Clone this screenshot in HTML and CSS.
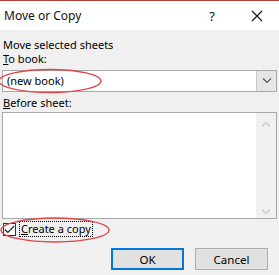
FILE: index.html
```html
<!DOCTYPE html>
<html>
<head>
  <title>Move or Copy</title>
  <link rel="stylesheet" href="styles.css">
</head>
<body>
  <div class="dialog">
    <div class="titlebar">
      <span class="title">Move or Copy</span>
      <span class="help">?</span>
      <span class="close">
        <svg width="12" height="12" viewBox="0 0 12 12"><path d="M1 1 L11 11 M11 1 L1 11" stroke="#111" stroke-width="1.1" fill="none"/></svg>
      </span>
    </div>

    <div class="content">
      <div class="label">Move selected sheets</div>
      <div class="label"><u>T</u>o book:</div>
      <div class="combo">
        <span class="combo-text">(new book)</span>
        <span class="combo-btn">
          <svg width="10" height="6" viewBox="0 0 10 6"><path d="M1 0.5 L5 4.5 L9 0.5" stroke="#555" stroke-width="1.1" fill="none"/></svg>
        </span>
      </div>
      <div class="label before"><u>B</u>efore sheet:</div>
      <div class="listbox">
        <div class="list-area"></div>
        <div class="scrollbar">
          <svg width="10" height="6" viewBox="0 0 10 6"><path d="M1 5.5 L5 1.5 L9 5.5" stroke="#c4c4c4" stroke-width="1.1" fill="none"/></svg>
          <svg width="10" height="6" viewBox="0 0 10 6"><path d="M1 0.5 L5 4.5 L9 0.5" stroke="#c4c4c4" stroke-width="1.1" fill="none"/></svg>
        </div>
      </div>
      <div class="check-row">
        <span class="checkbox">
          <svg width="11" height="9" viewBox="0 0 11 9"><path d="M0.8 4.5 L3.8 7.5 L10.2 1" stroke="#222" stroke-width="1.2" fill="none"/></svg>
        </span>
        <span class="check-label"><u>C</u>reate a copy</span>
      </div>
      <div class="buttons">
        <button class="btn default">OK</button>
        <button class="btn">Cancel</button>
      </div>
    </div>

    <!-- red annotation circles drawn over the dialog -->
    <svg class="marks" width="279" height="275" viewBox="0 0 279 275">
      <ellipse cx="50" cy="81" rx="51" ry="11.5" stroke="#e0454a" stroke-width="1.3" fill="none"/>
      <ellipse cx="55" cy="230" rx="54" ry="12" stroke="#e0454a" stroke-width="1.3" fill="none"/>
    </svg>
  </div>
</body>
</html>
```

FILE: styles.css
```css
body {
  margin: 0;
  padding: 0;
  font-family: "Noto Sans", "Open Sans", sans-serif;
  font-size: 11px;
  color: #000;
}
.dialog {
  position: relative;
  width: 279px;
  height: 275px;
  background-color: #f0f0f0;
  overflow: hidden;
}
.titlebar {
  display: flex;
  align-items: center;
  height: 30px;
  box-sizing: border-box;
  border-top: 1px solid #b8413a;
  background-color: #fff;
  padding-left: 4px;
}
.title {
  flex: 1;
  font-size: 12px;
  color: #111;
}
.help {
  width: 30px;
  font-size: 13px;
  color: #111;
  margin-right: 20px;
  text-align: center;
}
.close {
  width: 28px;
  display: flex;
  justify-content: flex-start;
  padding-left: 4px;
}
.content {
  padding: 8px 2px 0 2px;
}
.label {
  height: 14px;
  line-height: 14px;
  padding-left: 1px;
}
.label.before {
  margin-top: 4px;
}
.combo {
  display: flex;
  height: 22px;
  box-sizing: border-box;
  margin-top: 4px;
  border: 1px solid #a8a8a8;
  background-color: #fff;
}
.combo-text {
  flex: 1;
  padding-left: 4px;
  line-height: 20px;
}
.combo-btn {
  width: 19px;
  display: flex;
  align-items: center;
  justify-content: center;
  background-color: #e5e5e5;
  border-left: 1px solid #c8c8c8;
}
.listbox {
  display: flex;
  height: 107px;
  box-sizing: border-box;
  margin-top: 2px;
  border: 1px solid #a8a8a8;
  background-color: #fff;
}
.list-area {
  flex: 1;
}
.scrollbar {
  width: 20px;
  display: flex;
  flex-direction: column;
  justify-content: space-between;
  align-items: center;
  padding: 8px 0 3px 0;
  background-color: #f0f0f0;
}
.check-row {
  display: flex;
  align-items: center;
  margin-top: 2px;
  height: 16px;
}
.checkbox {
  width: 13px;
  height: 13px;
  box-sizing: border-box;
  border: 1px solid #333;
  background-color: #fff;
  display: flex;
  align-items: center;
  justify-content: center;
  margin-left: 1px;
}
.check-label {
  margin-left: 3px;
  padding: 0 1px;
  line-height: 14px;
  border: 1px dotted #000;
}
.buttons {
  display: flex;
  justify-content: flex-end;
  gap: 11px;
  margin-top: 11px;
  padding-right: 9px;
}
.btn {
  width: 73px;
  height: 22px;
  font-family: inherit;
  font-size: 11.5px;
  background-color: #e1e1e1;
  border: 1px solid #adadad;
  padding: 0;
  color: #000;
}
.btn.default {
  border: 2px solid #0078d7;
}
.marks {
  position: absolute;
  left: 0;
  top: 0;
  pointer-events: none;
}
```
